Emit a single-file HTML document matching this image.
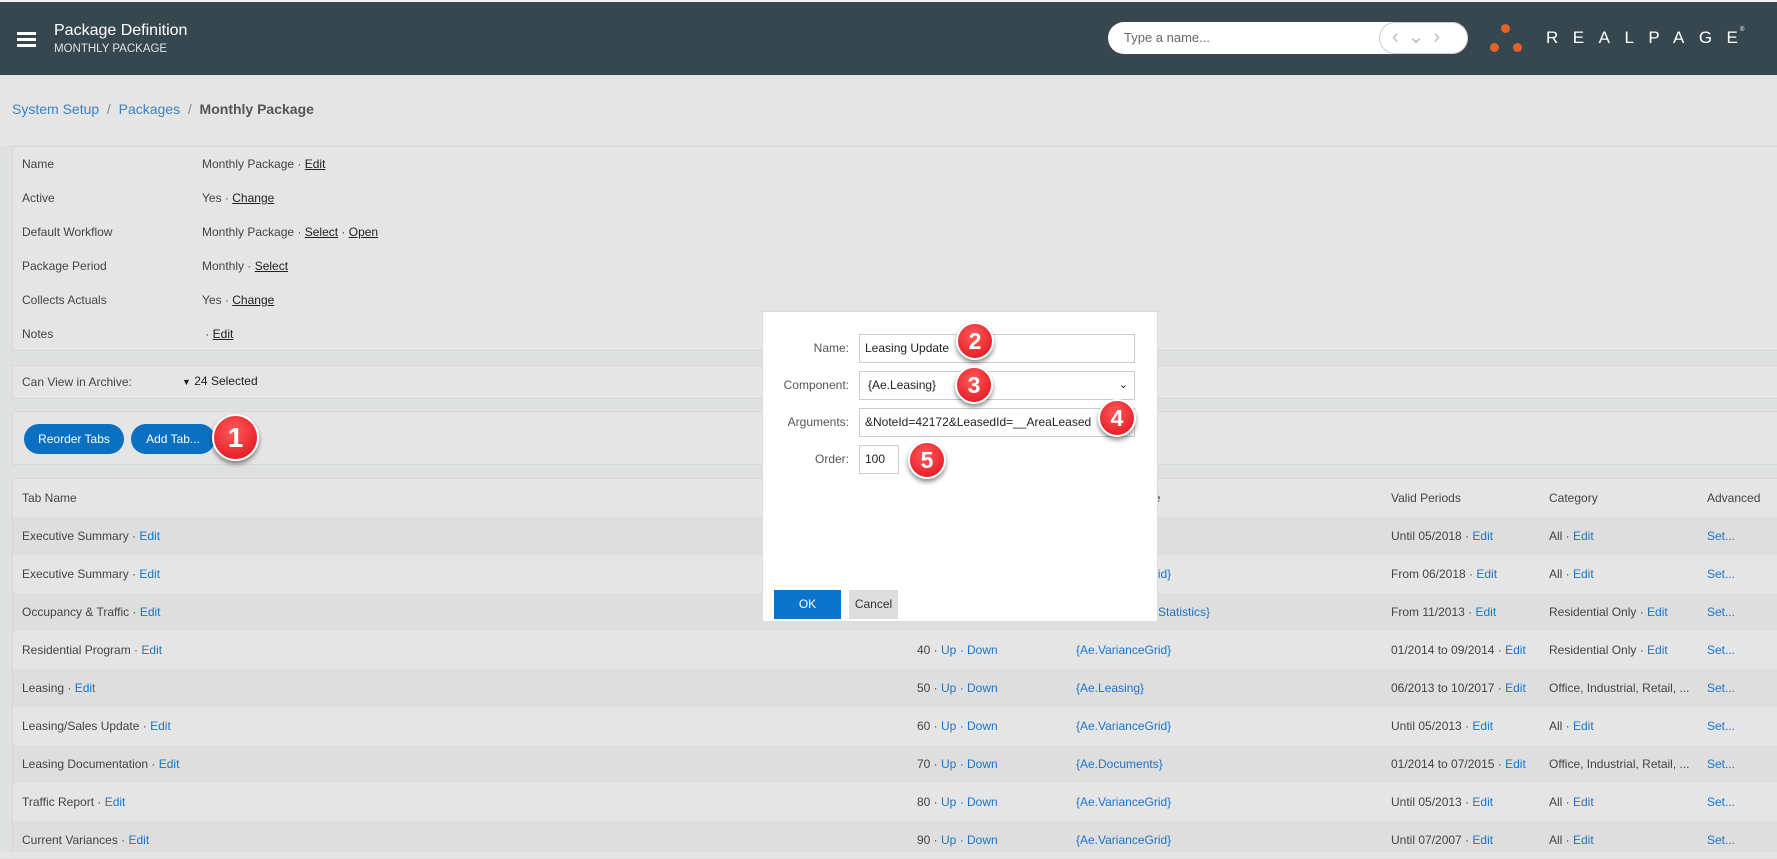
<!DOCTYPE html>
<html><head><meta charset="utf-8"><style>
*{margin:0;padding:0;box-sizing:border-box}
body{width:1777px;height:858px;overflow:hidden;background:#dfe0e0;font-family:"Liberation Sans",Arial,sans-serif;font-size:12px;color:#444;position:relative}
.a{position:absolute;white-space:nowrap}
.hdr{left:0;top:2px;width:1777px;height:73px;background:#37474f}
.bc{left:0;top:75px;width:1777px;height:70px;background:#e5e5e5}
.pnl{position:absolute;left:12px;width:1765px;background:#e5e5e5;border:1px solid #d6d8d8;border-right:none}
.lnk{color:#1c74c9}
u{color:#222}
.row{position:absolute;left:0;width:1765px;height:38px}
.c{position:absolute;top:0;line-height:38px;white-space:nowrap}
.badge{position:absolute;border-radius:50%;background:radial-gradient(circle at 45% 35%,#ff5a5a,#e8242c 70%,#c8161e);border:2px solid #fff;box-shadow:0 3px 5px rgba(0,0,0,.45);color:#fff;font-weight:bold;text-align:center;font-family:"Liberation Sans",sans-serif}
.inp{position:absolute;left:859px;width:276px;height:29px;border:1px solid #ccc;background:#fff;font-size:12px;line-height:27px;padding-left:5px;color:#222}
.lbl{position:absolute;right:928px;font-size:12px;color:#555;line-height:29px}
</style></head><body>
<div class="a hdr"></div>
<div class="a" style="left:0;top:0;width:1777px;height:2px;background:#f4f4f4"></div>
<div class="a" style="left:17px;top:32px;width:19px;height:3px;background:#fff;box-shadow:0 6px 0 #fff,0 12px 0 #fff"></div>
<div class="a" style="left:54px;top:22px;color:#fff;font-size:16px">Package Definition</div>
<div class="a" style="left:54px;top:43px;color:#dfe4e6;font-size:11.5px">MONTHLY PACKAGE</div>
<div class="a" style="left:1108px;top:22px;width:360px;height:32px;background:#fff;border-radius:16px"></div>
<div class="a" style="left:1124px;top:30px;color:#666;font-size:13px">Type a name...</div>
<div class="a" style="left:1379px;top:22px;width:89px;height:32px;border:1px solid #ccc;border-radius:16px;background:#fff;color:#bbb;font-size:20px;line-height:28px;padding-left:12px;letter-spacing:9px">‹⌄›</div>
<div class="a" style="left:1501px;top:24px;width:9px;height:9px;border-radius:50%;background:#e5622a"></div>
<div class="a" style="left:1490px;top:43px;width:9px;height:9px;border-radius:50%;background:#e5622a"></div>
<div class="a" style="left:1513px;top:43px;width:9px;height:9px;border-radius:50%;background:#e5622a"></div>
<div class="a" style="left:1546px;top:28px;color:#fff;font-size:17px;letter-spacing:14.5px">REALPAGE</div>
<div class="a" style="left:1740px;top:27px;color:#fff;font-size:6px">®</div>

<div class="a bc"></div>
<div class="a" style="left:12px;top:101px;font-size:14px;color:#888"><span class="lnk" style="color:#3b82c4">System Setup</span> &nbsp;/&nbsp; <span style="color:#3b82c4">Packages</span> &nbsp;/&nbsp; <b style="color:#555">Monthly Package</b></div>

<div class="pnl" style="top:146px;height:205px">
<div class="a" style="left:9px;top:0px;line-height:34px">Name<br>Active<br>Default Workflow<br>Package Period<br>Collects Actuals<br>Notes</div>
<div class="a" style="left:189px;top:0px;line-height:34px">Monthly Package · <u>Edit</u><br>Yes · <u>Change</u><br>Monthly Package · <u>Select</u> · <u>Open</u><br>Monthly · <u>Select</u><br>Yes · <u>Change</u><br>&nbsp;· <u>Edit</u></div>
</div>
<div class="pnl" style="top:365px;height:34px">
<div class="a" style="left:9px;top:9px">Can View in Archive:</div>
<div class="a" style="left:169px;top:8px;color:#222"><span style="font-size:9px">▼</span> 24 Selected</div>
</div>
<div class="pnl" style="top:411px;height:54px">
<div class="a" style="left:11px;top:12px;width:100px;height:30px;border-radius:15px;background:#0b6fc2;color:#fff;text-align:center;line-height:30px">Reorder Tabs</div>
<div class="a" style="left:118px;top:12px;width:84px;height:30px;border-radius:15px;background:#0b6fc2;color:#fff;text-align:center;line-height:30px">Add Tab...</div>
</div>
<div class="badge" style="left:212px;top:414px;width:47px;height:47px;font-size:28px;line-height:43px">1</div>

<div class="pnl" style="top:478px;height:374px;border-bottom:none">
<div class="row" style="top:0;background:#e5e5e5"><span class="c" style="left:9px">Tab Name</span><span class="c" style="left:1050px">Component Name</span><span class="c" style="left:1378px">Valid Periods</span><span class="c" style="left:1536px">Category</span><span class="c" style="left:1694px">Advanced</span></div>
<div class="row" style="top:38px;background:#dedede"><span class="c" style="left:9px">Executive Summary · <span class="lnk">Edit</span></span><span class="c" style="left:904px">10 · <span class="lnk">Up · Down</span></span><span class="c lnk" style="left:1063px">{Ae.Html}</span><span class="c" style="left:1378px">Until 05/2018 · <span class="lnk">Edit</span></span><span class="c" style="left:1536px">All · <span class="lnk">Edit</span></span><span class="c lnk" style="left:1694px">Set...</span></div>
<div class="row" style="top:76px;background:#e5e5e5"><span class="c" style="left:9px">Executive Summary · <span class="lnk">Edit</span></span><span class="c" style="left:904px">20 · <span class="lnk">Up · Down</span></span><span class="c lnk" style="left:1063px">{Ae.VarianceGrid}</span><span class="c" style="left:1378px">From 06/2018 · <span class="lnk">Edit</span></span><span class="c" style="left:1536px">All · <span class="lnk">Edit</span></span><span class="c lnk" style="left:1694px">Set...</span></div>
<div class="row" style="top:114px;background:#dedede"><span class="c" style="left:9px">Occupancy &amp; Traffic · <span class="lnk">Edit</span></span><span class="c" style="left:904px">30 · <span class="lnk">Up · Down</span></span><span class="c lnk" style="left:1063px">{Ae.OccupancyStatistics}</span><span class="c" style="left:1378px">From 11/2013 · <span class="lnk">Edit</span></span><span class="c" style="left:1536px">Residential Only · <span class="lnk">Edit</span></span><span class="c lnk" style="left:1694px">Set...</span></div>
<div class="row" style="top:152px;background:#e5e5e5"><span class="c" style="left:9px">Residential Program · <span class="lnk">Edit</span></span><span class="c" style="left:904px">40 · <span class="lnk">Up · Down</span></span><span class="c lnk" style="left:1063px">{Ae.VarianceGrid}</span><span class="c" style="left:1378px">01/2014 to 09/2014 · <span class="lnk">Edit</span></span><span class="c" style="left:1536px">Residential Only · <span class="lnk">Edit</span></span><span class="c lnk" style="left:1694px">Set...</span></div>
<div class="row" style="top:190px;background:#dedede"><span class="c" style="left:9px">Leasing · <span class="lnk">Edit</span></span><span class="c" style="left:904px">50 · <span class="lnk">Up · Down</span></span><span class="c lnk" style="left:1063px">{Ae.Leasing}</span><span class="c" style="left:1378px">06/2013 to 10/2017 · <span class="lnk">Edit</span></span><span class="c" style="left:1536px">Office, Industrial, Retail, ...</span><span class="c lnk" style="left:1694px">Set...</span></div>
<div class="row" style="top:228px;background:#e5e5e5"><span class="c" style="left:9px">Leasing/Sales Update · <span class="lnk">Edit</span></span><span class="c" style="left:904px">60 · <span class="lnk">Up · Down</span></span><span class="c lnk" style="left:1063px">{Ae.VarianceGrid}</span><span class="c" style="left:1378px">Until 05/2013 · <span class="lnk">Edit</span></span><span class="c" style="left:1536px">All · <span class="lnk">Edit</span></span><span class="c lnk" style="left:1694px">Set...</span></div>
<div class="row" style="top:266px;background:#dedede"><span class="c" style="left:9px">Leasing Documentation · <span class="lnk">Edit</span></span><span class="c" style="left:904px">70 · <span class="lnk">Up · Down</span></span><span class="c lnk" style="left:1063px">{Ae.Documents}</span><span class="c" style="left:1378px">01/2014 to 07/2015 · <span class="lnk">Edit</span></span><span class="c" style="left:1536px">Office, Industrial, Retail, ...</span><span class="c lnk" style="left:1694px">Set...</span></div>
<div class="row" style="top:304px;background:#e5e5e5"><span class="c" style="left:9px">Traffic Report · <span class="lnk">Edit</span></span><span class="c" style="left:904px">80 · <span class="lnk">Up · Down</span></span><span class="c lnk" style="left:1063px">{Ae.VarianceGrid}</span><span class="c" style="left:1378px">Until 05/2013 · <span class="lnk">Edit</span></span><span class="c" style="left:1536px">All · <span class="lnk">Edit</span></span><span class="c lnk" style="left:1694px">Set...</span></div>
<div class="row" style="top:342px;background:#dedede"><span class="c" style="left:9px">Current Variances · <span class="lnk">Edit</span></span><span class="c" style="left:904px">90 · <span class="lnk">Up · Down</span></span><span class="c lnk" style="left:1063px">{Ae.VarianceGrid}</span><span class="c" style="left:1378px">Until 07/2007 · <span class="lnk">Edit</span></span><span class="c" style="left:1536px">All · <span class="lnk">Edit</span></span><span class="c lnk" style="left:1694px">Set...</span></div>
</div>
<div class="a" style="left:0;top:852px;width:1777px;height:6px;background:#e5e5e5"></div>

<div class="a" style="left:762px;top:311px;width:396px;height:311px;background:#fff;border:1px solid #ddd"></div>
<div class="lbl" style="top:334px">Name:</div>
<div class="inp" style="top:334px">Leasing Update</div>
<div class="lbl" style="top:371px">Component:</div>
<div class="inp" style="top:371px;padding-left:8px">{Ae.Leasing}<span style="position:absolute;right:6px;top:0;font-size:11px;color:#222">&#8964;</span></div>
<div class="lbl" style="top:408px">Arguments:</div>
<div class="inp" style="top:408px">&amp;NoteId=42172&amp;LeasedId=__AreaLeased</div>
<div class="lbl" style="top:445px">Order:</div>
<div class="inp" style="top:445px;width:40px">100</div>
<div class="a" style="left:774px;top:590px;width:67px;height:29px;background:#0b74cc;color:#fff;text-align:center;line-height:29px">OK</div>
<div class="a" style="left:849px;top:590px;width:49px;height:29px;background:#ddd;color:#333;text-align:center;line-height:29px">Cancel</div>
<div class="badge" style="left:956px;top:322px;width:38px;height:38px;font-size:23px;line-height:34px">2</div>
<div class="badge" style="left:955px;top:366px;width:38px;height:38px;font-size:23px;line-height:34px">3</div>
<div class="badge" style="left:1098px;top:399px;width:38px;height:38px;font-size:23px;line-height:34px">4</div>
<div class="badge" style="left:908px;top:441px;width:38px;height:38px;font-size:23px;line-height:34px">5</div>
</body></html>
